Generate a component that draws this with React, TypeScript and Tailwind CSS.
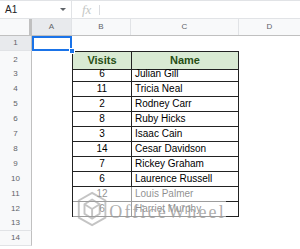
import React from 'react';

const rows: [string, string][] = [
  ['6', 'Julian Gill'],
  ['11', 'Tricia Neal'],
  ['2', 'Rodney Carr'],
  ['8', 'Ruby Hicks'],
  ['3', 'Isaac Cain'],
  ['14', 'Cesar Davidson'],
  ['7', 'Rickey Graham'],
  ['6', 'Laurence Russell'],
  ['12', 'Louis Palmer'],
  ['6', 'Harriet Murphy'],
];

const cols = 'grid grid-cols-[32px_40px_59px_108px_1fr]';

const App: React.FC = () => {
  return (
    <div className="relative w-[300px] h-[249px] overflow-hidden bg-white font-['Liberation_Sans',Arial,sans-serif]">
      {/* formula bar */}
      <div className="flex items-center h-[19px] border-t border-b border-[#e1e3e6]">
        <div className="flex items-center justify-between w-[72px] h-full pl-[5px] pr-[5px] border-r border-[#e1e3e6]">
          <span className="text-[10px] text-[#202124]">A1</span>
          <span className="w-0 h-0 border-l-[3px] border-r-[3px] border-t-[3px] border-l-transparent border-r-transparent border-t-[#5f6368]" />
        </div>
        <span className="ml-[10px] text-[13px] italic text-[#c4c7c5] font-['Liberation_Serif',serif]">fx</span>
        <span className="ml-[8px] w-px h-[10px] bg-[#dadce0]" />
      </div>

      {/* column headers */}
      <div className={`${cols} h-[17px] text-[8px] text-[#5f6368] bg-[#f8f9fa] border-b border-[#c0c0c0]`}>
        <div className="border-r-[3px] border-[#c0c0c0] bg-[#f8f9fa]" />
        <div className="flex items-center justify-center bg-[#e8eaed] border-r border-[#e1e3e6]">A</div>
        <div className="flex items-center justify-center border-r border-[#e1e3e6]">B</div>
        <div className="flex items-center justify-center border-r border-[#e1e3e6]">C</div>
        <div className="flex items-center justify-center">D</div>
      </div>

      {/* rows */}
      {Array.from({ length: 14 }, (_, i) => {
        const n = i + 1;
        const data = n >= 3 && n <= 12 ? rows[n - 3] : null;
        const isHead = n === 2;
        const inTable = n >= 2 && n <= 12;
        const faded = n === 11;
        return (
          <div key={n} className={`${cols} h-[15px] text-[10px]`}>
            <div
              className={`flex items-center justify-center text-[8px] text-[#5f6368] border-r border-b border-[#c0c0c0] border-b-[#e1e3e6] ${
                n === 1 ? 'bg-[#e8eaed]' : 'bg-[#f8f9fa]'
              }`}
            >
              {n}
            </div>
            <div className="relative">
              {n === 1 && (
                <>
                  <div className="absolute inset-0 border-2 border-[#1a73e8]" />
                  <div className="absolute right-[-3px] bottom-[-3px] w-[6px] h-[6px] bg-[#1a73e8] border border-white" />
                </>
              )}
            </div>
            {inTable ? (
              <>
                <div
                  className={`flex items-center justify-center border-l border-b border-[#222] ${isHead ? 'border-t bg-[#d9ead3] font-bold text-[11px] text-[#274e13]' : 'text-black'} ${faded ? 'text-[#8a8a8a]' : ''}`}
                >
                  {isHead ? 'Visits' : data?.[0]}
                </div>
                <div
                  className={`flex items-center border-l border-r border-b border-[#222] ${isHead ? 'border-t justify-center bg-[#d9ead3] font-bold text-[11px] text-[#274e13]' : 'pl-[3px] text-black'} ${faded ? 'text-[#8a8a8a]' : ''}`}
                >
                  {isHead ? 'Name' : data?.[1]}
                </div>
              </>
            ) : (
              <>
                <div />
                <div />
              </>
            )}
            <div />
          </div>
        );
      })}

      {/* watermark */}
      <div className="absolute left-[73px] top-[187px] w-[153px] h-[45px] bg-white/55 flex items-center">
        <svg width="36" height="42" viewBox="0 0 36 42" className="ml-[2px] opacity-60">
          <g fill="none" stroke="#9e9e9e" strokeWidth="2">
            <path d="M18 3 L32 11 L32 29 L18 37 L4 29 L4 11 Z" />
            <path d="M18 10 L26 15 L26 25 L18 30 L10 25 L10 15 Z" />
            <path d="M18 20 L18 30 M18 20 L26 15 M18 20 L10 15" />
          </g>
        </svg>
        <span className="ml-[0px] mt-[6px] text-[18px] tracking-[2.2px] text-[#9a9a9a]/80 font-['Liberation_Serif',serif]">
          OfficeWheel
        </span>
      </div>
    </div>
  );
};

export default App;
